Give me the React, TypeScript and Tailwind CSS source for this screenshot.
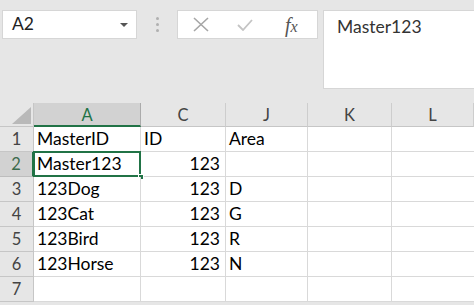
import React from 'react';

const font = { fontFamily: 'Lato, "Open Sans", sans-serif' };

const columns = [
  { key: 'A', selected: true },
  { key: 'C' },
  { key: 'J' },
  { key: 'K' },
  { key: 'L' },
];

const rows: { a: string; c: string; j: string }[] = [
  { a: 'MasterID', c: 'ID', j: 'Area' },
  { a: 'Master123', c: '123', j: '' },
  { a: '123Dog', c: '123', j: 'D' },
  { a: '123Cat', c: '123', j: 'G' },
  { a: '123Bird', c: '123', j: 'R' },
  { a: '123Horse', c: '123', j: 'N' },
  { a: '', c: '', j: '' },
];

function NameBox() {
  return (
    <div className="ml-[2px] flex h-[29px] w-[135px] items-center justify-between border border-[#d6d6d6] bg-white pl-[9px] pr-[8px]">
      <span className="text-[17.5px] text-[#222]">A2</span>
      <svg width="8" height="4" viewBox="0 0 8 4">
        <polygon points="0,0 8,0 4,4" fill="#555" />
      </svg>
    </div>
  );
}

function FormulaIcons() {
  return (
    <div className="flex h-[29px] w-[141px] items-center border border-[#d6d6d6] bg-white">
      <svg className="ml-[15px]" width="16" height="15" viewBox="0 0 16 15">
        <path d="M1 1 L15 14 M15 1 L1 14" stroke="#a6a6a6" strokeWidth="1.6" fill="none" />
      </svg>
      <svg className="ml-[28px]" width="16" height="12" viewBox="0 0 16 12">
        <path d="M1 6 L6 11 L15 1" stroke="#c4c4c4" strokeWidth="1.8" fill="none" />
      </svg>
      <span
        className="ml-[32px] text-[20px] italic leading-none text-[#555]"
        style={{ fontFamily: '"Liberation Serif", serif' }}
      >
        f<span className="text-[16px]">x</span>
      </span>
    </div>
  );
}

function Dots() {
  return (
    <div className="flex w-[40px] flex-col items-center gap-[3px] pt-[7px]">
      <div className="h-[3px] w-[3px] rounded-full bg-[#b0b0b0]" />
      <div className="h-[3px] w-[3px] rounded-full bg-[#b0b0b0]" />
      <div className="h-[3px] w-[3px] rounded-full bg-[#b0b0b0]" />
    </div>
  );
}

export default function App() {
  return (
    <div className="h-[305px] w-[474px] overflow-hidden bg-[#e6e6e6]" style={font}>
      <div className="flex pt-[10px]">
        <NameBox />
        <Dots />
        <FormulaIcons />
        <div className="ml-[5px] h-[79px] flex-1 border border-r-0 border-[#d6d6d6] bg-white pl-[13px] pt-[3px] text-[17.5px] text-[#333]">
          Master123
        </div>
      </div>

      <div className="mt-[14px] grid grid-cols-[34px_107px_85px_82px_84px_1fr] grid-rows-[24px_repeat(7,25px)] text-[17.5px] text-black">
        <div className="relative border-r border-b border-[#c6c6c6] bg-[#e6e6e6]">
          <svg className="absolute bottom-[2px] right-[2px]" width="19" height="17" viewBox="0 0 19 17">
            <polygon points="19,0 19,17 0,17" fill="#b9b9b9" />
          </svg>
        </div>
        {columns.map((col) =>
          col.selected ? (
            <div
              key={col.key}
              className="flex items-center justify-center border-r border-b-2 border-r-[#ababab] border-b-[#217346] bg-[#d2d2d2] pt-[2px] text-[16.5px] text-[#217346]"
            >
              {col.key}
            </div>
          ) : (
            <div
              key={col.key}
              className="flex items-center justify-center border-r border-b border-r-[#cdcdcd] border-b-[#c6c6c6] bg-[#e6e6e6] pt-[1px] text-[16.5px] text-[#444]"
            >
              {col.key}
            </div>
          )
        )}

        {rows.map((row, i) => (
          <React.Fragment key={i}>
            <div
              className={
                i === 1
                  ? 'flex items-center justify-center border-r-2 border-b border-r-[#217346] border-b-[#bdbdbd] bg-[#d2d2d2] text-[16.5px] text-[#3d6b4d]'
                  : 'flex items-center justify-center border-r border-b border-[#c6c6c6] bg-[#e6e6e6] text-[16.5px] text-[#444]'
              }
            >
              {i + 1}
            </div>
            <div className="relative flex items-center border-r border-b border-[#d9d9d9] bg-white pl-[3px]">
              {row.a}
              {i === 1 && (
                <>
                  <div className="absolute -left-px -top-px -right-px -bottom-px border-2 border-[#217346]" />
                  <div className="absolute -bottom-[4px] -right-[4px] h-[6px] w-[6px] border border-white bg-[#217346]" />
                </>
              )}
            </div>
            <div
              className={
                'flex items-center border-r border-b border-[#d9d9d9] bg-white pr-[5px] ' +
                (i === 0 ? 'justify-start pl-[3px]' : 'justify-end')
              }
            >
              {row.c}
            </div>
            <div className="flex items-center border-r border-b border-[#d9d9d9] bg-white pl-[3px]">{row.j}</div>
            <div className="border-r border-b border-[#d9d9d9] bg-white" />
            <div className="border-b border-[#d9d9d9] bg-white" />
          </React.Fragment>
        ))}
      </div>
    </div>
  );
}
